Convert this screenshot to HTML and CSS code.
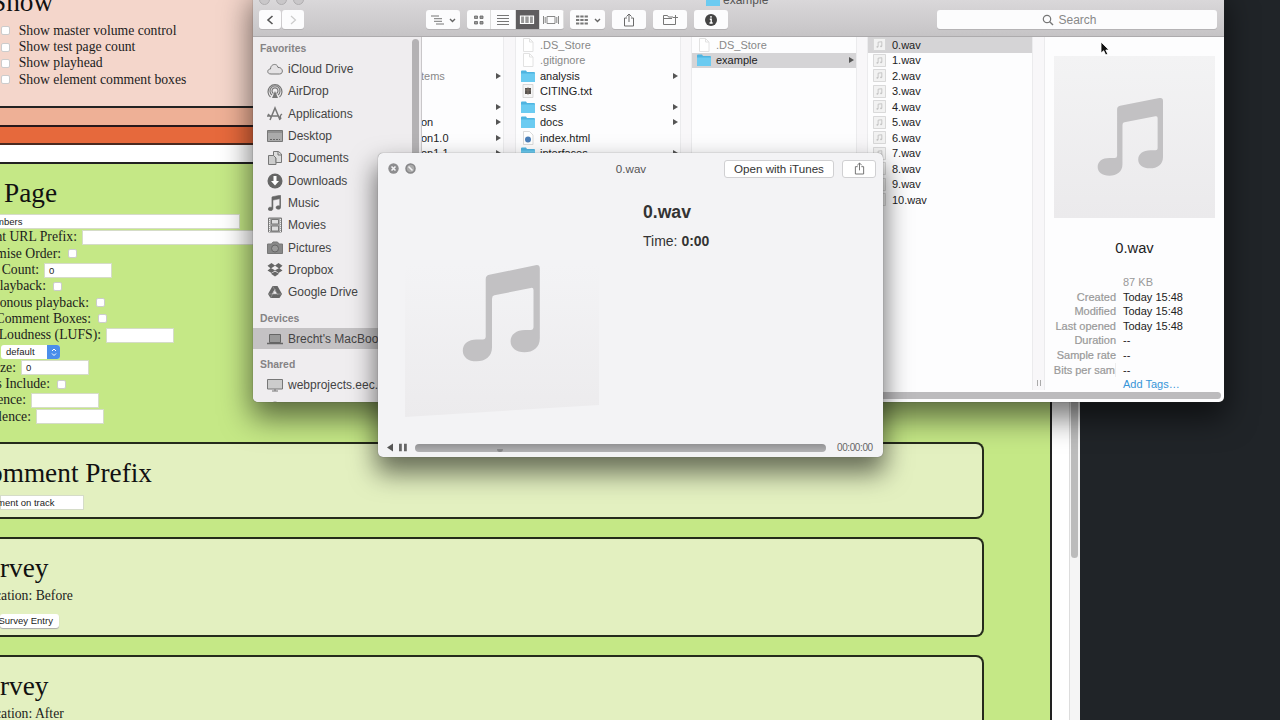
FILE: index.html
```html
<!DOCTYPE html>
<html>
<head>
<meta charset="UTF-8">
<title>Test Create</title>
<link rel="stylesheet" href="styles.css">
</head>
<body>

	<!-- icons -->
	<svg class="defs" width="0" height="0">
		<symbol id="note" viewBox="0 0 200 240" preserveAspectRatio="none"><path d="M60 37Q60 28 69 26L186 3Q197 1 197 11V180C197 203 180 214 158 214C137 214 123 203 123 188C123 171 137 160 160 160H175Q181 160 181 154V63Q181 56 174 58L82 76Q76 77 76 84V202C76 225 59 236 37 236C15 236 2 225 2 210C2 193 16 183 37 183H53Q60 183 60 176Z"/></symbol>
		<symbol id="folder" viewBox="0 0 14 12"><path d="M0 1.5Q0 .5 1 .5H5L6 2H13Q14 2 14 3V11Q14 12 13 12H1Q0 12 0 11Z" fill="#4fb4e0"/><path d="M0 3.5H14V11Q14 12 13 12H1Q0 12 0 11Z" fill="#6bcbf1"/></symbol>
		<symbol id="page" viewBox="0 0 14 14"><path d="M2.5.5H8.5L12 4V13.5H2.5ZM8.5.5V4H12" fill="#fff" stroke="#e2e2e2"/></symbol>
		<symbol id="txt" viewBox="0 0 14 14"><path d="M2 .5H12V13.5H2Z" fill="#f5f5f5" stroke="#ccc" stroke-width=".7"/><path d="M4 4H10V10H4Z" fill="#58534f"/><path d="M4 6H10M7 3V11" stroke="#8b7b70" stroke-width=".7"/></symbol>
		<symbol id="html" viewBox="0 0 14 14"><path d="M2.5.5H8.5L12 4V13.5H2.5Z" fill="#fff" stroke="#ccc" stroke-width=".7"/><circle cx="7" cy="8.5" r="3" fill="#4b7fb9"/></symbol>
		<symbol id="audio" viewBox="0 0 14 14"><path d="M.5.5H13.5V13.5H.5Z" fill="#f2f2f2" stroke="#d5d5d5"/><path d="M5.5 9.5V4.5L9.500 4V9" fill="none" stroke="#c2c2c2"/><circle cx="4.700" cy="9.500" r="1" fill="#c2c2c2"/><circle cx="8.700" cy="9" r="1" fill="#c2c2c2"/></symbol>
		<symbol id="share" viewBox="0 0 12 14"><path d="M4 5H1.500V13H10.500V5H8M6 9V1M3.500 3.500L6 1L8.500 3.500" fill="none" stroke="#6a6a6a"/></symbol>
	</svg>

	<div class="browser">
		<div class="page">
			<div class="global">
				<div class="show">
					<h1>Show</h1>
					<div class="check"><i class="box"></i>Show master volume control</div>
					<div class="check"><i class="box"></i>Show test page count</div>
					<div class="check"><i class="box"></i>Show playhead</div>
					<div class="check"><i class="box"></i>Show element comment boxes</div>
				</div>
			</div>
			<div class="test">
				<h1 class="first">Page</h1>
				<div class="row"><span class="text title">mbers</span></div>
				<div class="row"><label class="url">nt URL Prefix:</label><span class="text long"></span></div>
				<div class="row"><label class="order">mise Order:</label><i class="box"></i></div>
				<div class="row"><label class="count">Count:</label><span class="text">0</span></div>
				<div class="row"><label class="loop">layback:</label><i class="box"></i></div>
				<div class="row"><label class="sync">onous playback:</label><i class="box"></i></div>
				<div class="row"><label class="comments">Comment Boxes:</label><i class="box"></i></div>
				<div class="row"><label class="lufs">Loudness (LUFS):</label><span class="text"></span></div>
				<div class="row"><span class="select">default<b><svg width="8" height="10" viewBox="0 0 8 10"><path d="M2 4L4 2L6 4M2 6.500L4 8.500L6 6.500" fill="none" stroke="#fff"/></svg></b></span></div>
				<div class="row"><label class="size">ize:</label><span class="text">0</span></div>
				<div class="row"><label class="include">s Include:</label><i class="box"></i></div>
				<div class="row"><label class="pre">ence:</label><span class="text"></span></div>
				<div class="row"><label class="post">lence:</label><span class="text"></span></div>

				<div class="node prefix">
					<h1>omment Prefix</h1>
					<span class="text">ment on track</span>
				</div>
				<div class="node survey">
					<h1>rvey</h1>
					<p>cation: Before</p>
					<span class="button">Survey Entry</span>
				</div>
				<div class="node survey">
					<h1>rvey</h1>
					<p>cation: After</p>
				</div>
			</div>
		</div>
		<div class="scroll"><div class="thumb"></div></div>
	</div>

	<div class="finder">
		<div class="toolbar">
			<div class="titlebar">
				<div class="lights"><i></i><i></i><i></i></div>
				<div class="name"><svg width="14" height="12"><use href="#folder"/></svg>example</div>
			</div>
			<div class="tools">
				<span class="btn back"><svg width="8" height="12" viewBox="0 0 8 12"><path d="M6.500 2L2 6L6.500 10" fill="none" stroke="#555" stroke-width="1.600"/></svg></span>
				<span class="btn forward"><svg width="8" height="12" viewBox="0 0 8 12"><path d="M2 2L6.500 6L2 10" fill="none" stroke="#ccc" stroke-width="1.200"/></svg></span>
				<span class="btn path"><svg width="26" height="12" viewBox="0 0 26 12"><path d="M1 2H9M4 4.700H12M4 7.300H12M6 10H14" stroke="#777"/><path d="M20 5L22.500 7.500L25 5" fill="none" stroke="#666" stroke-width="1.400"/></svg></span>
				<span class="views">
					<span><svg width="12" height="12" viewBox="0 0 12 12"><path d="M1.500 2H4.500V4.500H1.500ZM7 2H10V4.500H7ZM1.500 7.500H4.500V10H1.500ZM7 7.500H10V10H7Z" fill="#999" stroke="#666" stroke-width=".8"/></svg></span>
					<span><svg width="14" height="12" viewBox="0 0 14 12"><path d="M1 1.500H13M1 4.500H13M1 7.500H13M1 10.500H13" stroke="#777"/></svg></span>
					<span class="on"><svg width="16" height="12" viewBox="0 0 16 12"><path d="M1.500 2H14.500V9.500H1.500ZM5.700 2V9.500M10.300 2V9.500" fill="#999" stroke="#fff" stroke-width="1.200"/></svg></span>
					<span><svg width="16" height="12" viewBox="0 0 16 12"><path d="M4 2.500H12V9.500H4ZM.5 2V10M2.200 3V9M13.800 3V9M15.500 2V10" fill="none" stroke="#888"/></svg></span>
				</span>
				<span class="btn group"><svg width="26" height="12" viewBox="0 0 26 12"><path d="M1 2.500H13M1 6H13M1 9.500H13" stroke="#777" stroke-width="2.200" stroke-dasharray="3.300 1"/><path d="M20 5L22.500 7.500L25 5" fill="none" stroke="#666" stroke-width="1.400"/></svg></span>
				<span class="btn share"><svg width="12" height="14"><use href="#share"/></svg></span>
				<span class="btn new"><svg width="16" height="12" viewBox="0 0 16 12"><path d="M11 3H6.500L5.500 1.500H1.500V10.500H13.500V6M1.500 4.500H10M13.500 1V6M11 3.500H16" fill="none" stroke="#777"/></svg></span>
				<span class="btn info"><svg width="12" height="12" viewBox="0 0 12 12"><circle cx="6" cy="6" r="6" fill="#444"/><path d="M6 2V3.800M4.800 5.300H6.200V9M4.500 9H7.700" fill="none" stroke="#fff" stroke-width="1.400"/></svg></span>
				<span class="search"><svg width="12" height="12" viewBox="0 0 12 12"><circle cx="5" cy="5" r="3.700" fill="none" stroke="#777" stroke-width="1.200"/><path d="M7.700 7.700L11 11" stroke="#777" stroke-width="1.400"/></svg>Search</span>
			</div>
		</div>

		<div class="content">
			<div class="sidebar">
				<div class="places">
					<h2 class="top">Favorites</h2>
					<div class="place"><svg width="16" height="16" viewBox="0 0 16 16"><path d="M4 13C-.5 13 0 8 3.500 8C3.500 2.500 10.500 2 11 6.500C16 6 17 13 12.500 13Z" fill="#e4e2e4" stroke="#777"/></svg>iCloud Drive</div>
					<div class="place"><svg width="16" height="16" viewBox="0 0 16 16"><path d="M3.500 14A7 7 0 1 1 12.500 14M5 12A5 5 0 1 1 11 12M6.500 10.500A3 3 0 1 1 9.500 10.500" fill="none" stroke="#777" stroke-width="1.200"/><path d="M8 8L11 15H5Z" fill="#777"/></svg>AirDrop</div>
					<div class="place"><svg width="16" height="16" viewBox="0 0 16 16"><path d="M3 14L8 2L13 14M0 10H12M1 8L4 11M15 8Q12 10 14 13" fill="none" stroke="#777" stroke-width="1.500"/></svg>Applications</div>
					<div class="place"><svg width="16" height="16" viewBox="0 0 16 16"><path d="M.5 2.500H15.500V13.500H.5Z" fill="#aaa" stroke="#777"/><path d="M1 4H15" stroke="#777"/><path d="M3 11.500H13" stroke="#666" stroke-dasharray="2 1"/></svg>Desktop</div>
					<div class="place"><svg width="16" height="16" viewBox="0 0 16 16"><path d="M1.500 5.500H7L9 8V14.500H1.500Z" fill="#ccc" stroke="#777"/><path d="M6.500 1.500H11.500L14.500 4V12.500H9V8L6.500 5.500Z" fill="#ddd" stroke="#777"/><path d="M11 1.500V5H14.500" fill="none" stroke="#777"/></svg>Documents</div>
					<div class="place"><svg width="16" height="16" viewBox="0 0 16 16"><circle cx="8" cy="8" r="7.500" fill="#666"/><path d="M6.500 3H9.500V8H12L8 12.500L4 8H6.500Z" fill="#fff"/></svg>Downloads</div>
					<div class="place"><svg width="16" height="16" viewBox="0 0 16 16"><use href="#note" x="1" width="13" height="16" fill="#666" stroke="#666" stroke-width="8"/></svg>Music</div>
					<div class="place"><svg width="16" height="16" viewBox="0 0 16 16"><path d="M1.500 1H14.500V15H1.500Z" fill="#aaa" stroke="#777"/><path d="M4.500 2.500H11.500V7H4.500ZM4.500 9H11.500V14H4.500Z" fill="#ddd" stroke="#777"/><path d="M2.500 2V15M13.500 2V15" stroke="#eee" stroke-dasharray="1 1"/></svg>Movies</div>
					<div class="place"><svg width="16" height="16" viewBox="0 0 16 16"><path d="M.5 4H4.500L6 2H10.500L12 4H15.500V13.500H.5Z" fill="#888" stroke="#777"/><circle cx="8" cy="8.500" r="3.500" fill="#999" stroke="#666"/></svg>Pictures</div>
					<div class="place"><svg width="16" height="16" viewBox="0 0 16 16"><path d="M4.500 1L8 3.500L11.500 1L15.500 3.700L12.500 6.200L15.500 8.500L11.500 11L8 8.500L4.500 11L.5 8.500L3.500 6.200L.5 3.700Z" fill="#666"/><path d="M8 3.700L11.800 6.200L8 8.300L4.200 6.200Z" fill="#efedef"/><path d="M4 11.700L8 9.500L12 11.700L8 14.500Z" fill="#666"/></svg>Dropbox</div>
					<div class="place"><svg width="16" height="16" viewBox="0 0 16 16"><path d="M5.500 2H10.500L15 10L12.500 14H3.500L1 10Z" fill="#666"/><path d="M7.500 5.500L10 10H5Z" fill="#efedef"/><path d="M5.500 2L11 11M1 10H14M3.500 14L8.500 5" stroke="#aaa" stroke-width=".6"/></svg>Google Drive</div>
					<h2>Devices</h2>
					<div class="place selected"><svg width="16" height="16" viewBox="0 0 16 16"><path d="M2.500 3.500H13.500V11.500H2.500Z" fill="#999" stroke="#666"/><path d="M0 12.500H16" stroke="#666" stroke-width="1.500"/></svg>Brecht's MacBoo</div>
					<h2>Shared</h2>
					<div class="place"><svg width="16" height="16" viewBox="0 0 16 16"><path d="M.5 2.500H15.500V12H.5Z" fill="#ccc" stroke="#777"/><path d="M8 12V14M5 14H11" stroke="#777"/></svg>webprojects.eec.</div>
					<div class="place"><svg width="16" height="16" viewBox="0 0 16 16"><circle cx="8" cy="8" r="6.500" fill="#888"/></svg></div>
				</div>
				<div class="bar"></div>
			</div>

			<div class="columns">
				<div class="lists">
					<div class="list parents">
						<div class="file"></div>
						<div class="file"></div>
						<div class="file dim dir">tems</div>
						<div class="file"></div>
						<div class="file dir"></div>
						<div class="file dir">on</div>
						<div class="file dir">on1.0</div>
						<div class="file dir">on1.1</div>
					</div>
					<div class="gutter wide"></div>
					<div class="list">
						<div class="file dim"><svg width="14" height="14"><use href="#page"/></svg>.DS_Store</div>
						<div class="file dim"><svg width="14" height="14"><use href="#page"/></svg>.gitignore</div>
						<div class="file dir"><svg width="14" height="12"><use href="#folder"/></svg>analysis</div>
						<div class="file"><svg width="14" height="14"><use href="#txt"/></svg>CITING.txt</div>
						<div class="file dir"><svg width="14" height="12"><use href="#folder"/></svg>css</div>
						<div class="file dir"><svg width="14" height="12"><use href="#folder"/></svg>docs</div>
						<div class="file"><svg width="14" height="14"><use href="#html"/></svg>index.html</div>
						<div class="file dir"><svg width="14" height="12"><use href="#folder"/></svg>interfaces</div>
					</div>
					<div class="gutter"></div>
					<div class="list">
						<div class="file dim"><svg width="14" height="14"><use href="#page"/></svg>.DS_Store</div>
						<div class="file dir selected"><svg width="14" height="12"><use href="#folder"/></svg>example</div>
					</div>
					<div class="gutter"></div>
					<div class="list">
						<div class="file selected"><svg width="13" height="13"><use href="#audio"/></svg>0.wav</div>
						<div class="file"><svg width="13" height="13"><use href="#audio"/></svg>1.wav</div>
						<div class="file"><svg width="13" height="13"><use href="#audio"/></svg>2.wav</div>
						<div class="file"><svg width="13" height="13"><use href="#audio"/></svg>3.wav</div>
						<div class="file"><svg width="13" height="13"><use href="#audio"/></svg>4.wav</div>
						<div class="file"><svg width="13" height="13"><use href="#audio"/></svg>5.wav</div>
						<div class="file"><svg width="13" height="13"><use href="#audio"/></svg>6.wav</div>
						<div class="file"><svg width="13" height="13"><use href="#audio"/></svg>7.wav</div>
						<div class="file"><svg width="13" height="13"><use href="#audio"/></svg>8.wav</div>
						<div class="file"><svg width="13" height="13"><use href="#audio"/></svg>9.wav</div>
						<div class="file"><svg width="13" height="13"><use href="#audio"/></svg>10.wav</div>
					</div>
					<div class="gutter wide grip"><i></i></div>
					<div class="preview">
						<div class="art"><svg width="67" height="80"><use href="#note"/></svg></div>
						<div class="caption">0.wav</div>
						<div class="info-table">
							<span></span><em>87 KB</em>
							<span>Created</span><b>Today 15:48</b>
							<span>Modified</span><b>Today 15:48</b>
							<span>Last opened</span><b>Today 15:48</b>
							<span>Duration</span><b>--</b>
							<span>Sample rate</span><b>--</b>
							<span class="cut">Bits per sam</span><b>--</b>
							<span></span><a>Add Tags…</a>
						</div>
					</div>
				</div>
				<div class="hscroll"></div>
			</div>
		</div>
	</div>

	<div class="quicklook">
		<div class="head">
			<div class="icons">
				<svg width="11" height="11" viewBox="0 0 11 11"><circle cx="5.500" cy="5.500" r="5.200" fill="#8d8d8f"/><path d="M3.500 3.500L7.500 7.500M7.500 3.500L3.500 7.500" stroke="#f3f3f5" stroke-width="1.600"/></svg>
				<svg width="11" height="11" viewBox="0 0 11 11"><circle cx="5.500" cy="5.500" r="4.500" fill="#aaa" stroke="#858587" stroke-width="1.500"/><path d="M3.500 3.500L7.500 7.500" stroke="#f3f3f5" stroke-width="1.600"/></svg>
			</div>
			<div class="name">0.wav</div>
			<div class="actions">
				<span class="open">Open with iTunes</span>
				<span class="send"><svg width="11" height="13"><use href="#share"/></svg></span>
			</div>
		</div>
		<div class="body">
			<div class="cover"><svg width="79" height="99"><use href="#note"/></svg></div>
			<div class="meta">
				<h3>0.wav</h3>
				<p>Time: <b>0:00</b></p>
			</div>
		</div>
		<div class="player">
			<svg width="22" height="9" viewBox="0 0 22 9"><path d="M0 4.500L6 .5V8.500Z" fill="#555"/><path d="M12 .8H14.800V8.200H12ZM17 .8H19.800V8.200H17Z" fill="#666"/></svg>
			<div class="track"><i></i></div>
			<span>00:00:00</span>
		</div>
	</div>

	<svg class="cursor" width="11" height="16" viewBox="0 0 11 16"><path d="M1 1V12L3.700 9.700L5.700 14L7.700 13L5.800 9H9Z" fill="#111" stroke="#fff" stroke-width=".8"/></svg>

</body>
</html>
```
FILE: styles.css
```css
* {
	box-sizing: border-box;
}

body {
	margin: 0;
	width: 1280px;
	height: 720px;
	overflow: hidden;
	position: relative;
	background: #202428;
	font-family: "Liberation Sans", Arial, sans-serif;
	white-space: nowrap;
}

svg {
	flex: none;
}

.defs {
	position: absolute;
}

/* browser window */
.browser {
	position: absolute;
	left: 0;
	top: 0;
	width: 1080px;
	height: 720px;
	display: flex;
	overflow: hidden;
	background: #fff;
	font: 13.7px "Liberation Serif", "Times New Roman", serif;
	color: #1c1c1c;
}

.page {
	width: 1052px;
}

.browser h1 {
	margin: 0;
	font-size: 27.3px;
	font-weight: normal;
	line-height: 32px;
	color: #111;
}

.global {
	height: 145px;
	background: linear-gradient(#eeb096 125px, #26181a 125px, #26181a 127px, #e6693c 127px);
	border-bottom: 2px solid #4a2a20;
}

.show {
	height: 108px;
	background: #f4d6cb;
	border-bottom: 2px solid #222;
}

.show h1 {
	height: 22.5px;
	line-height: 5px;
	margin-left: -9px;
}

.check {
	display: flex;
	align-items: center;
	height: 16.4px;
}

.box {
	flex: none;
	width: 9px;
	height: 9px;
	background: #fff;
	border: 1px solid #ccc;
	border-radius: 2px;
}

.check .box {
	margin: 0 8.7px 0 1px;
}

.test {
	height: 600px;
	margin-top: 17px;
	background: #c5e886;
	border: 2px solid #222;
	border-left: 0;
}

.test .first {
	padding: 13px 0 0 4px;
	height: 49px;
}

.row {
	display: flex;
	align-items: center;
	height: 16.3px;
}

.row label {
	display: flex;
	justify-content: flex-end;
	flex: none;
}

.row .box {
	margin-left: 7px;
}

.text {
	display: block;
	width: 68px;
	height: 15px;
	margin-left: 5px;
	padding-left: 4px;
	background: #fff;
	border: 1px solid #d5dcc8;
	font: 9.5px/14px "Liberation Sans", Arial, sans-serif;
}

.text.title {
	width: 240px;
	margin-left: 0;
	padding-left: 0;
	border-left: 0;
	text-indent: -4px;
}

.text.long { width: 240px; }
.url { width: 77px; }
.order { width: 61px; }
.count { width: 39px; }
.loop { width: 46px; }
.sync { width: 89px; }
.comments { width: 91px; }
.lufs { width: 101px; }
.size { width: 16px; }
.include { width: 50px; }
.pre { width: 26px; }
.post { width: 31px; }

.select {
	display: flex;
	justify-content: space-between;
	width: 59px;
	height: 14px;
	margin-left: 1px;
	padding-left: 5px;
	background: #fff;
	border-radius: 3px;
	font: 9.5px/14px "Liberation Sans", Arial, sans-serif;
}

.select b {
	display: flex;
	align-items: center;
	justify-content: center;
	width: 13px;
	background: #4a8eea;
	border-radius: 0 3px 3px 0;
}

.node {
	width: 984px;
	background: #e3f0c0;
	border: 2px solid #252b1b;
	border-left: 0;
	border-radius: 0 8px 8px 0;
}

.prefix {
	height: 77px;
	margin-top: 17px;
	padding-top: 13px;
}

.prefix h1 {
	margin-left: -11px;
}

.prefix .text {
	width: 84px;
	margin: 6px 0 0;
	padding: 0;
	text-indent: -4px;
}

.survey {
	height: 100px;
	margin-top: 18px;
	padding-top: 13px;
}

.survey p {
	margin: 4px 0 0 -5px;
	line-height: 16px;
}

.button {
	display: block;
	width: 59px;
	height: 14px;
	margin-top: 10px;
	background: #fff;
	border-radius: 3px;
	box-shadow: 0 1px 1px #aaa;
	font: 9.5px/14px "Liberation Sans", Arial, sans-serif;
	text-indent: -1.5px;
}

.scroll {
	width: 11px;
	margin-left: 17px;
	background: #f5f5f5;
	border-left: 1px solid #ddd;
}

.thumb {
	width: 7px;
	height: 558px;
	margin-left: 1px;
	background: #bcbcbc;
	border-radius: 4px;
}

/* finder window */
.finder {
	position: absolute;
	left: 253px;
	top: -12px;
	width: 971px;
	height: 414px;
	display: flex;
	flex-direction: column;
	overflow: hidden;
	background: #fdfdfe;
	border-radius: 5px;
	box-shadow: 0 0 1px #333, 0 14px 30px 2px rgba(0, 0, 0, .55);
	color: #333;
}

.toolbar {
	height: 49px;
	background: linear-gradient(#e0dee0, #c6c4c6);
	border-bottom: 1px solid #adabad;
}

.titlebar {
	display: flex;
	height: 22px;
}

.lights {
	display: flex;
	gap: 6px;
	width: 453px;
	padding: 6px 0 0 6px;
}

.lights i {
	width: 11px;
	height: 11px;
	background: #c9c7c9;
	border: 1px solid #b0aeb0;
	border-radius: 50%;
}

.titlebar .name {
	display: flex;
	gap: 3px;
	align-items: center;
	height: 24px;
	font-size: 12px;
	color: #555;
}

.tools {
	display: flex;
	height: 19px;
}

.btn, .views, .search {
	display: flex;
	align-items: center;
	justify-content: center;
	width: 34px;
	background: #fcfcfd;
	border-radius: 3px;
	box-shadow: 0 1px 0 #b5b3b5;
}

.back { width: 22px; margin-left: 6px; }
.forward { width: 22px; margin-left: 1px; }
.path { margin-left: 122px; }

.views {
	width: 97px;
	margin: 0 6px 0 7px;
	overflow: hidden;
}

.views span {
	display: flex;
	flex: 1;
	align-items: center;
	justify-content: center;
	height: 19px;
	border-right: 1px solid #ddd;
}

.views .on {
	background: #5f5d5f;
}

.group { width: 35px; }
.share, .new, .info { margin-left: 7px; }

.search {
	gap: 4px;
	width: 280px;
	margin-left: 209px;
	padding-right: 15px;
	font-size: 12px;
	color: #888;
}

.content {
	display: flex;
	flex: 1;
	min-height: 0;
}

.sidebar {
	display: flex;
	width: 169px;
	background: #efedef;
	border-right: 1px solid #c9c7c9;
	overflow: hidden;
}

.places {
	flex: none;
	width: 159px;
}

.places h2 {
	height: 24.2px;
	margin: 0;
	padding: 7px 0 0 7px;
	font-size: 10.4px;
	line-height: 16px;
	color: #858385;
}

.places .top {
	height: 20.8px;
	padding-top: 4px;
}

.place {
	display: flex;
	align-items: center;
	gap: 5px;
	height: 22.35px;
	padding-left: 14px;
	font-size: 12px;
	color: #444;
}

.place.selected {
	height: 21px;
	margin: .7px 0 .6px;
	background: #c4c2c4;
}

.bar {
	width: 7px;
	height: 340px;
	margin-top: 2px;
	background: #b4b2b4;
	border-radius: 4px;
}

.columns {
	display: flex;
	flex: 1;
	flex-direction: column;
}

.lists {
	display: flex;
	height: 353px;
	overflow: hidden;
}

.list {
	width: 164px;
}

.list.parents {
	width: 81px;
}

.gutter {
	width: 12px;
	background: #f8f7f9;
	border: 1px solid #ebebed;
	border-width: 0 1px;
}

.gutter.wide {
	width: 13px;
}

.file {
	display: flex;
	align-items: center;
	gap: 5px;
	height: 15.5px;
	padding-left: 5px;
	font-size: 11px;
	color: #222;
}

.file svg[width="13"] {
	margin-right: 1px;
}

.parents .file {
	padding-left: 0;
	text-indent: -1px;
}

.file.dim {
	color: #888;
}

.file.selected {
	background: #d5d4d6;
}

.file.dir::after {
	content: "";
	margin: 0 2px 0 auto;
	border: 3px solid transparent;
	border-left: 5px solid #555;
	border-right: 0;
}

.grip {
	display: flex;
	align-items: flex-end;
	justify-content: center;
}

.grip i {
	width: 4px;
	height: 6px;
	margin-bottom: 4px;
	border: 1px solid #aaa;
	border-width: 0 1px;
}

.preview {
	flex: 1;
	padding: 19px 9px 0;
}

.art {
	display: flex;
	align-items: center;
	justify-content: center;
	height: 162px;
	padding-right: 9px;
	background: linear-gradient(#f3f3f4, #ebeaec);
	fill: #c2c1c3;
}

.caption {
	padding-top: 21px;
	font-size: 14.7px;
	line-height: 18px;
	text-align: center;
	color: #222;
}

.info-table {
	display: grid;
	grid-template-columns: 62px 1fr;
	grid-auto-rows: 14.6px;
	column-gap: 7px;
	margin-top: 18px;
	font-size: 11px;
	line-height: 14.6px;
}

.info-table span {
	display: flex;
	justify-content: flex-end;
	color: #999;
	-webkit-text-stroke: .2px #999;
}

.info-table .cut {
	border-right: 1px solid #eee;
}

.info-table em {
	font-style: normal;
	color: #999;
}

.info-table b {
	font-weight: normal;
	color: #222;
}

.info-table a {
	color: #3795d8;
}

.hscroll {
	height: 7px;
	margin: 2px 3px 0 0;
	background: #bcbbbd;
	border-radius: 0 4px 4px 0;
}

/* quick look panel */
.quicklook {
	position: absolute;
	left: 378px;
	top: 153px;
	width: 505px;
	height: 304px;
	display: flex;
	flex-direction: column;
	background: #f3f3f5;
	border-radius: 5px;
	box-shadow: 0 0 1px #555, 0 14px 26px 2px rgba(0, 0, 0, .55);
	color: #333;
}

.head {
	display: grid;
	grid-template-columns: 1fr auto 1fr;
	align-items: center;
	height: 31px;
	padding: 0 7px 0 10px;
	font-size: 11.6px;
}

.icons {
	display: flex;
	gap: 6px;
}

.head .name {
	margin-left: -2px;
	color: #555;
}

.actions {
	display: flex;
	justify-content: flex-end;
	gap: 8px;
}

.actions span {
	display: flex;
	align-items: center;
	justify-content: center;
	height: 18px;
	background: #fff;
	border: 1px solid #d0d0d2;
	border-radius: 3px;
}

.actions .open { width: 110px; }
.actions .send { width: 34px; }

.body {
	display: flex;
	flex: 1;
}

.cover {
	width: 194px;
	height: 202px;
	margin: 31px 0 0 27px;
	padding: 49px 0 0 57px;
	background: linear-gradient(#f3f3f5 25%, #ecebed);
	clip-path: polygon(0 0, 100% 6%, 100% 94%, 0 100%);
	fill: #c2c1c3;
}

.meta {
	margin: 18px 0 0 44px;
}

.meta h3 {
	margin: 0;
	font-size: 17.6px;
	line-height: 20px;
}

.meta p {
	margin: 10px 0 0;
	font-size: 14px;
	line-height: 18px;
}

.player {
	display: flex;
	align-items: center;
	height: 19px;
	padding-left: 9px;
	font-size: 10px;
	color: #666;
}

.track {
	width: 411px;
	height: 8px;
	margin: 0 11px 0 6px;
	background: linear-gradient(#929294, #b2b2b4);
	border-radius: 4px;
}

.track i {
	display: block;
	width: 6px;
	height: 3px;
	margin: 5px 0 0 82px;
	background: #858587;
	border-radius: 0 0 3px 3px;
}

.player span {
	letter-spacing: -.4px;
}

/* pointer */
.cursor {
	position: absolute;
	left: 1100px;
	top: 41px;
}
```
